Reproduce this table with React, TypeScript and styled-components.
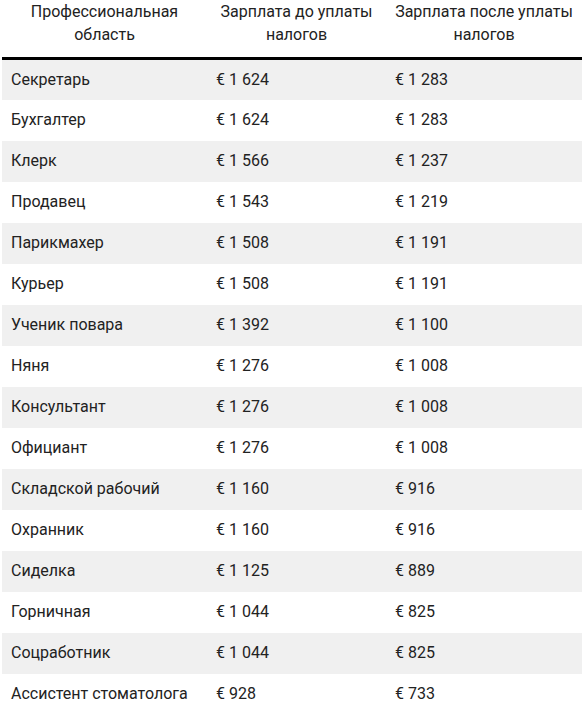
import React from "react";
import styled, { createGlobalStyle } from "styled-components";

const GlobalStyle = createGlobalStyle`
  body {
    margin: 0;
    background: #ffffff;
    font-family: Roboto, "Liberation Sans", sans-serif;
  }
`;

const Wrapper = styled.div`
  padding: 0 3px 0 2px;
`;

const Table = styled.table`
  width: 580px;
  border-collapse: collapse;
  table-layout: fixed;
  font-size: 16px;
  color: #222222;
`;

const HeadCell = styled.th<{ $width: number }>`
  box-sizing: border-box;
  width: ${(p) => p.$width}px;
  padding: 0 8px 11px;
  font-weight: 400;
  line-height: 23px;
  text-align: center;
  vertical-align: bottom;
  border-bottom: 3px solid #000000;
`;

const Row = styled.tr<{ $shaded: boolean }>`
  background: ${(p) => (p.$shaded ? "#f0f0f0" : "#ffffff")};
`;

const Cell = styled.td`
  box-sizing: border-box;
  height: 41px;
  padding: 0 9px;
  line-height: 20px;
  vertical-align: middle;
  white-space: nowrap;
`;

const rows: [string, string, string][] = [
  ["Секретарь", "€ 1 624", "€ 1 283"],
  ["Бухгалтер", "€ 1 624", "€ 1 283"],
  ["Клерк", "€ 1 566", "€ 1 237"],
  ["Продавец", "€ 1 543", "€ 1 219"],
  ["Парикмахер", "€ 1 508", "€ 1 191"],
  ["Курьер", "€ 1 508", "€ 1 191"],
  ["Ученик повара", "€ 1 392", "€ 1 100"],
  ["Няня", "€ 1 276", "€ 1 008"],
  ["Консультант", "€ 1 276", "€ 1 008"],
  ["Официант", "€ 1 276", "€ 1 008"],
  ["Складской рабочий", "€ 1 160", "€ 916"],
  ["Охранник", "€ 1 160", "€ 916"],
  ["Сиделка", "€ 1 125", "€ 889"],
  ["Горничная", "€ 1 044", "€ 825"],
  ["Соцработник", "€ 1 044", "€ 825"],
  ["Ассистент стоматолога", "€ 928", "€ 733"],
];

function App(): React.ReactElement {
  return (
    <>
      <GlobalStyle />
      <Wrapper>
        <Table>
          <thead>
            <tr>
              <HeadCell $width={205}>Профессиональная область</HeadCell>
              <HeadCell $width={179}>Зарплата до уплаты налогов</HeadCell>
              <HeadCell $width={196}>Зарплата после уплаты налогов</HeadCell>
            </tr>
          </thead>
          <tbody>
            {rows.map(([job, gross, net], i) => (
              <Row key={job} $shaded={i % 2 === 0}>
                <Cell>{job}</Cell>
                <Cell>{gross}</Cell>
                <Cell>{net}</Cell>
              </Row>
            ))}
          </tbody>
        </Table>
      </Wrapper>
    </>
  );
}

export default App;
